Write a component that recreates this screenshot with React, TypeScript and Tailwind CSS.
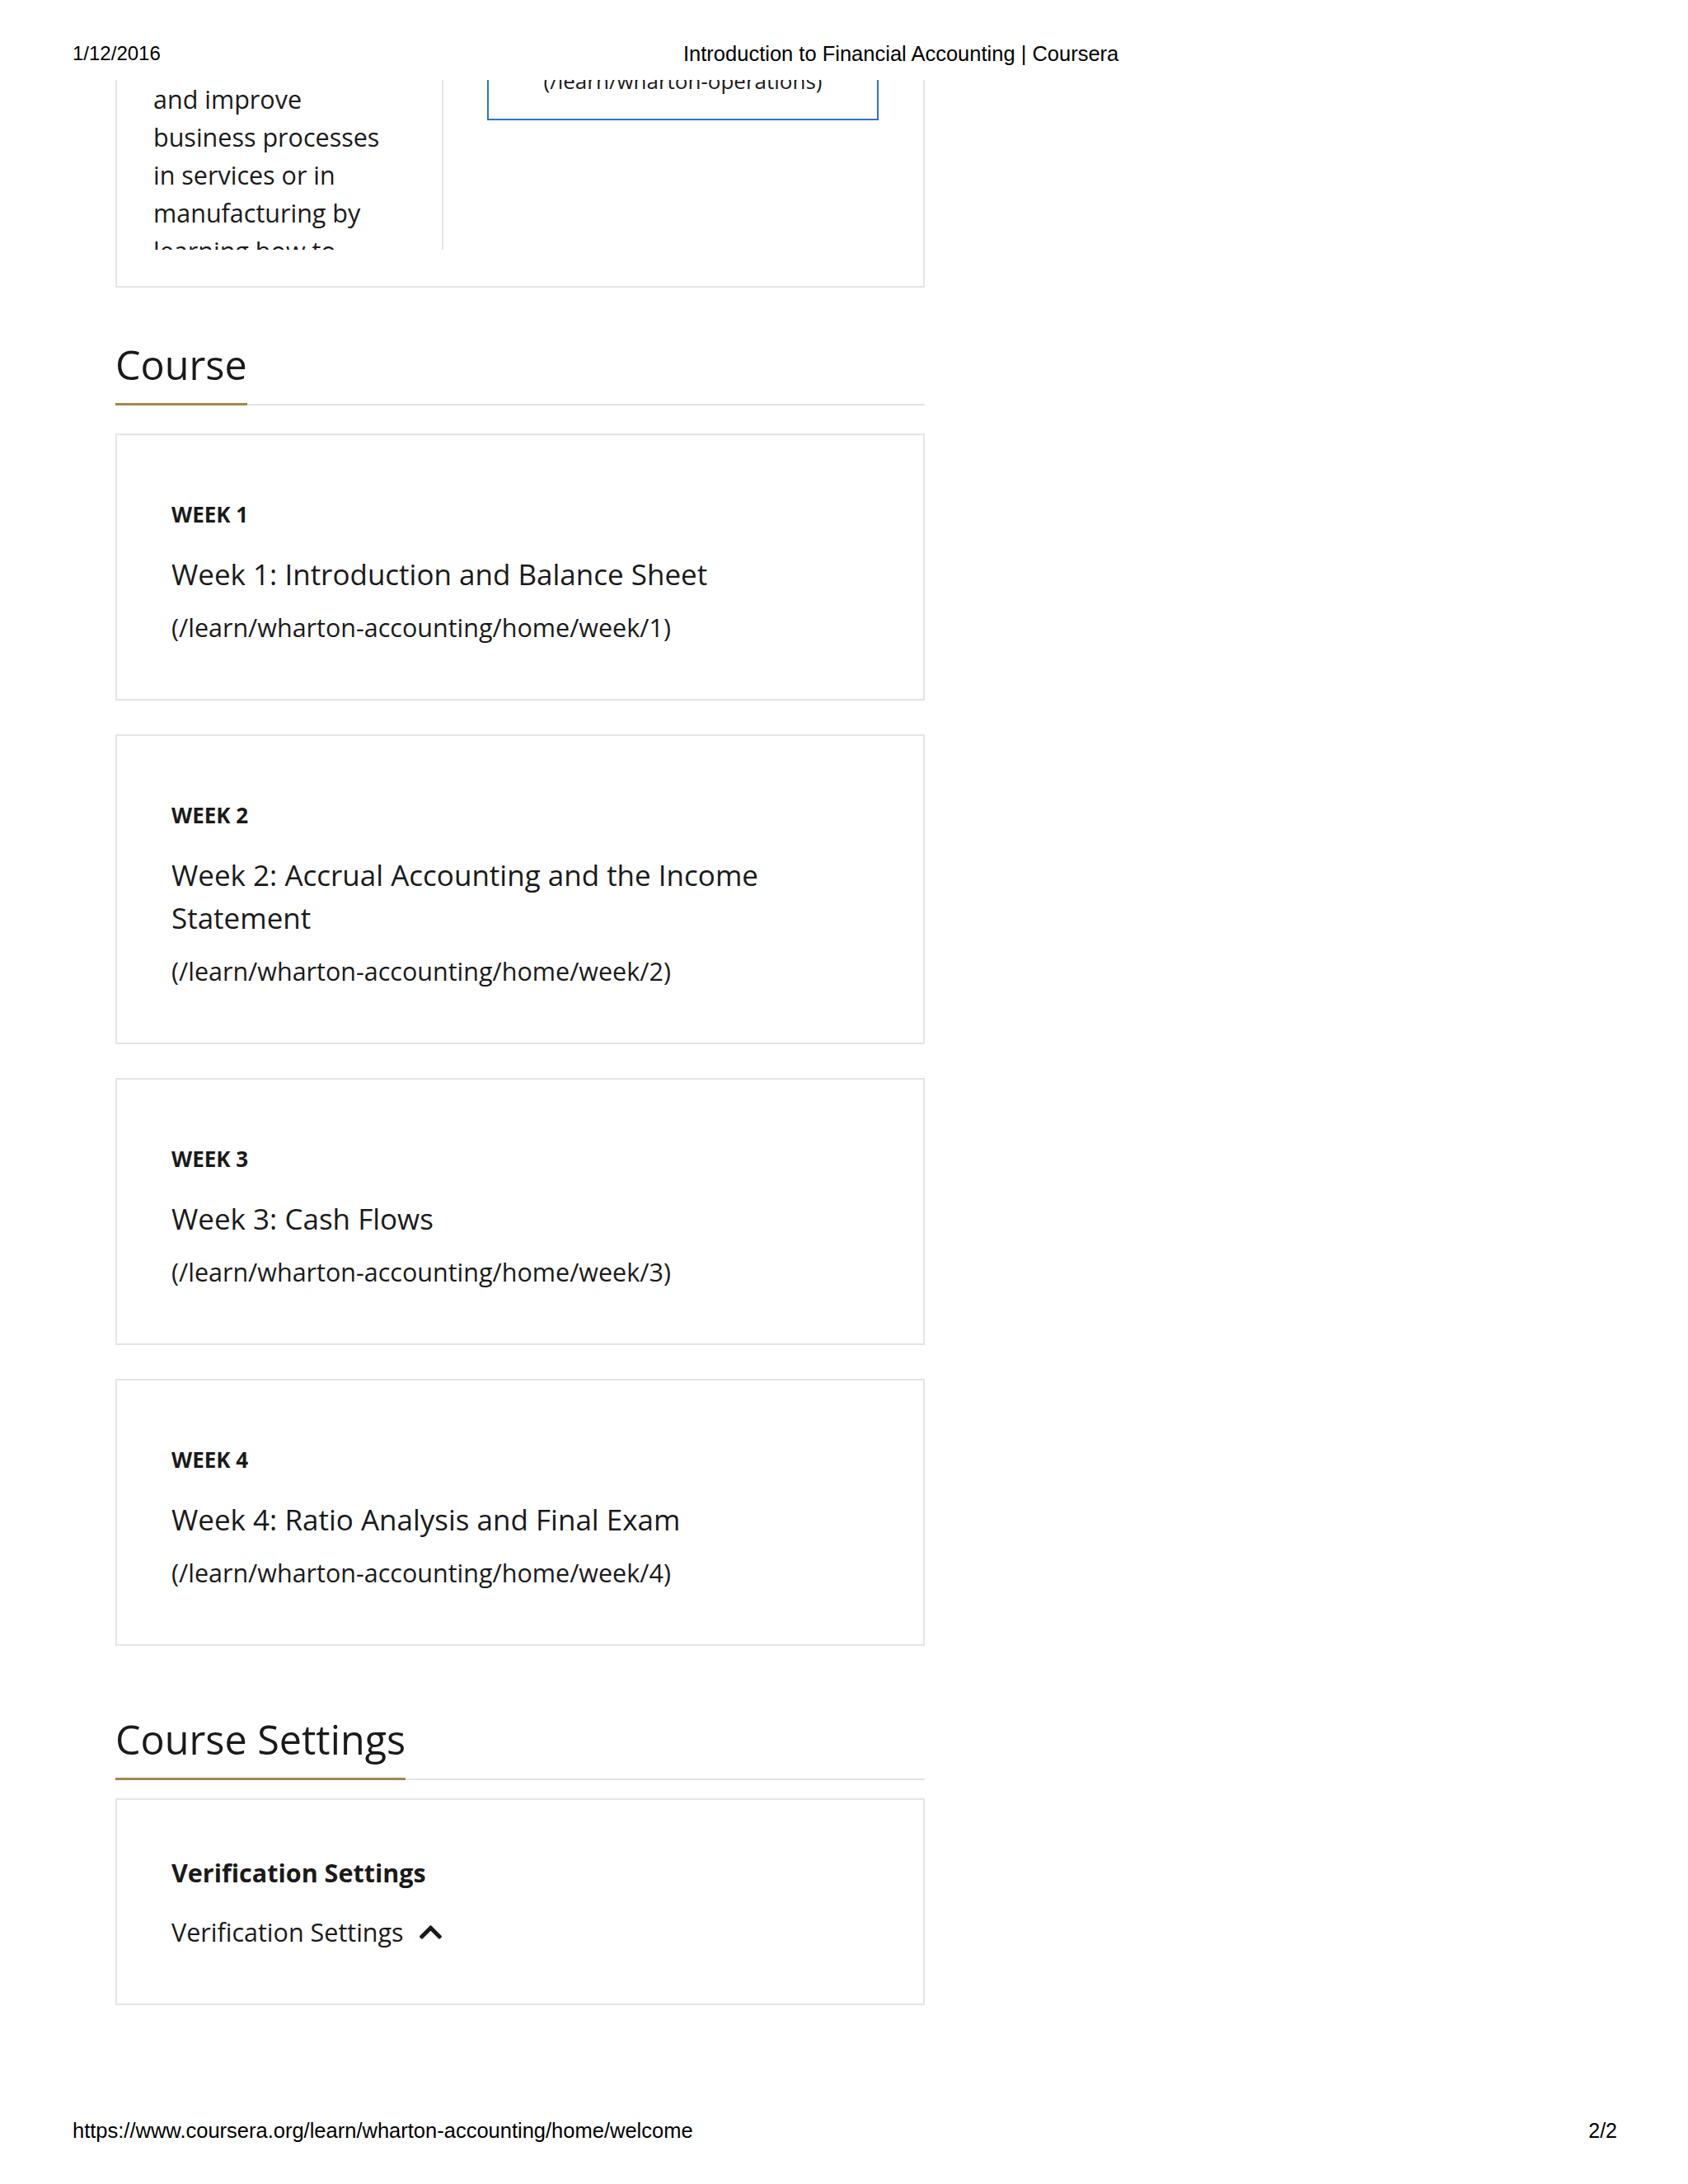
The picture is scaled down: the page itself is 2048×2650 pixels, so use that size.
import React from 'react';

const weeks = [
  { n: 1, title: 'Week 1: Introduction and Balance Sheet' },
  { n: 2, title: 'Week 2: Accrual Accounting and the Income Statement' },
  { n: 3, title: 'Week 3: Cash Flows' },
  { n: 4, title: 'Week 4: Ratio Analysis and Final Exam' },
];

const ChevronUp: React.FC = () => (
  <svg width="27" height="17" viewBox="5 123 438 266" fill="currentColor">
    <path d="M240.971 130.524l194.343 194.343c9.373 9.373 9.373 24.569 0 33.941l-22.667 22.667c-9.357 9.357-24.522 9.375-33.901.04L224 227.495 69.255 381.516c-9.379 9.335-24.544 9.317-33.901-.04l-22.667-22.667c-9.373-9.373-9.373-24.569 0-33.941L207.03 130.525c9.372-9.373 24.568-9.373 33.941-.001z" />
  </svg>
);

const SectionTitle: React.FC<{ title: string; className: string }> = ({ title, className }) => (
  <div className={`flex border-b-2 border-[#e3e3e3] ${className}`}>
    <h2 className="-mb-[2px] border-b-[3px] border-[#a5864e] pb-[17px] text-[48.5px] leading-[60px]">
      {title}
    </h2>
  </div>
);

const App: React.FC = () => {
  return (
    <div className="w-[2048px] h-[2650px] bg-white flex flex-col text-[#1a1a1a]">
      {/* print header */}
      <header className="h-[97px] shrink-0 pt-[51px] flex font-['Liberation_Sans',Arial,sans-serif] leading-[28px] text-black">
        <span className="w-[829px] shrink-0 pl-[88px] text-[24px]">1/12/2016</span>
        <span className="text-[25.5px]">Introduction to Financial Accounting | Coursera</span>
      </header>

      <main className="flex-1 pl-[140px] font-['Open_Sans',sans-serif]">
        <div className="w-[982px]">
          {/* tail of the related courses card, cut by the page break */}
          <div className="h-[252px] border-x-2 border-b-2 border-[#e5e5e5] bg-white">
            <div className="flex h-[206px] overflow-hidden">
              <div className="w-[396px] shrink-0 pl-[44px] border-r-2 border-[#e5e5e5]">
                <p className="w-[290px] text-[30.5px] leading-[46px]">
                  and improve business processes in services or in manufacturing by learning how to
                  design and manage operations
                </p>
              </div>
              <div className="flex-1 pl-[53px]">
                <div className="w-[475px] -mt-[24px] border-2 border-[#2f73c9] pb-[23px] text-center text-[26px] leading-[46px]">
                  (/learn/wharton-operations)
                </div>
              </div>
            </div>
          </div>

          <SectionTitle title="Course" className="mt-[63px]" />

          <div className="mt-[34px] flex flex-col gap-[41px]">
            {weeks.map((week) => (
              <div
                key={week.n}
                className="border-2 border-[#e5e5e5] bg-white pl-[66px] pt-[76px] pb-[64px]"
              >
                <div className="text-[26px] leading-[40px] font-bold uppercase">Week {week.n}</div>
                <div className="mt-[27px] max-w-[780px] text-[35px] leading-[52px]">{week.title}</div>
                <div className="mt-[15px] text-[30.5px] leading-[46px]">
                  (/learn/wharton-accounting/home/week/{week.n})
                </div>
              </div>
            ))}
          </div>

          <SectionTitle title="Course Settings" className="mt-[83px]" />

          <div className="mt-[22px] border-2 border-[#e5e5e5] bg-white pl-[66px] pt-[68px] pb-[64px]">
            <div className="text-[30.5px] leading-[40px] font-bold">Verification Settings</div>
            <div className="mt-[29px] flex items-center gap-[19px] text-[30.5px] leading-[46px]">
              <span>Verification Settings</span>
              <ChevronUp />
            </div>
          </div>
        </div>
      </main>

      {/* print footer */}
      <footer className="h-[79px] shrink-0 flex justify-between pl-[88px] pr-[86px] font-['Liberation_Sans',Arial,sans-serif] text-[25.5px] leading-[28px] text-black">
        <span>https://www.coursera.org/learn/wharton-accounting/home/welcome</span>
        <span className="text-[25px]">2/2</span>
      </footer>
    </div>
  );
};

export default App;
